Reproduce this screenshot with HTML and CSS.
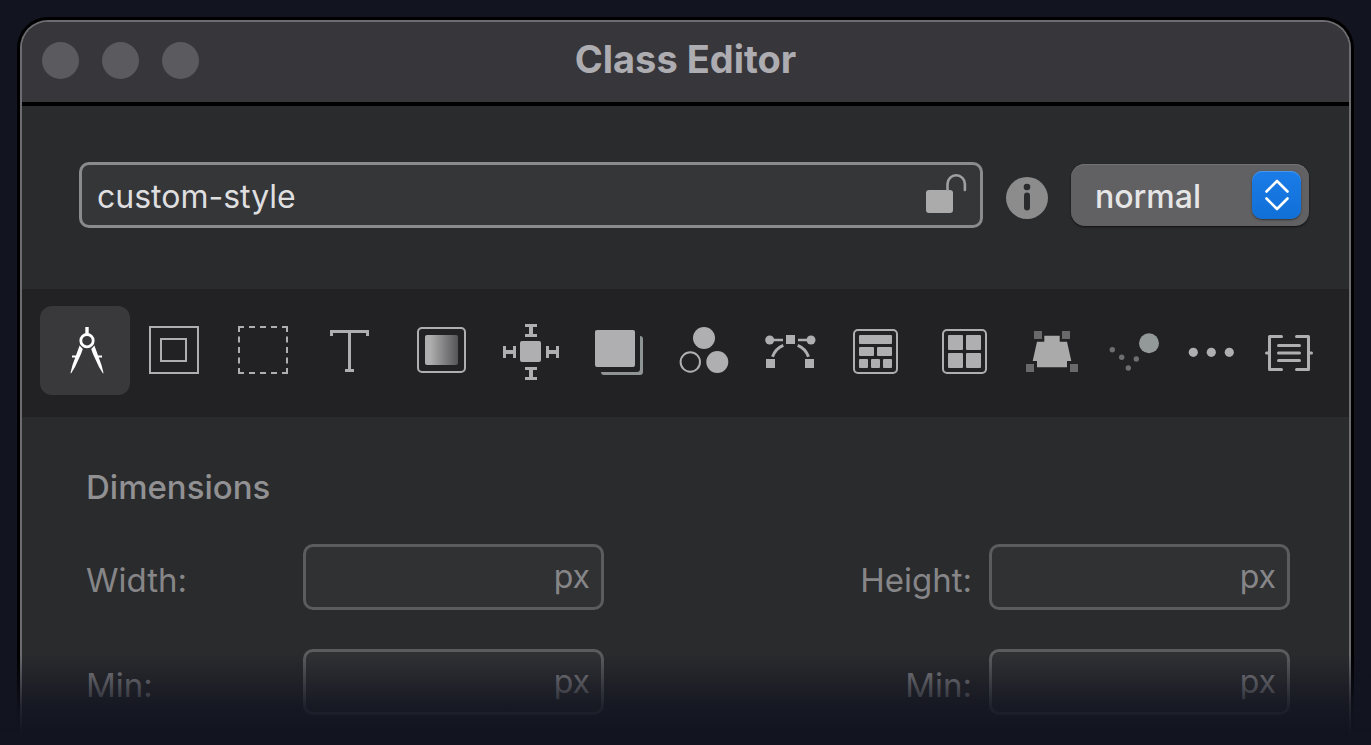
FILE: index.html
```html
<!DOCTYPE html>
<html lang="en">
<head>
  <meta charset="UTF-8" />
  <meta name="viewport" content="width=device-width, initial-scale=1.0"/>
  <title>Class Editor</title>
  <link rel="stylesheet" href="styles.css">
</head>
<body>

  <main class="window">
    <header class="titlebar">
      <div class="lights">
        <button class="light" aria-label="Close"></button>
        <button class="light" aria-label="Minimize"></button>
        <button class="light" aria-label="Zoom"></button>
      </div>
      <h1>Class Editor</h1>
    </header>

    <div class="class-row">
      <div class="name-field">
        <input type="text" class="name-input" aria-label="Class name" value="custom-style" />
        <button class="icon-btn" aria-label="Unlock">
          <svg width="42" height="42" viewBox="0 2 42 42">
            <rect x="1" y="18" width="27" height="23" rx="3" fill="#ababab"/>
            <path d="M22.500 18V12a8.700 8.700 0 0 1 17.400 0V18" fill="none" stroke="#a0a0a0" stroke-width="2.600" stroke-linecap="round"/>
          </svg>
        </button>
      </div>
      <button class="icon-btn info" aria-label="Info">
        <svg width="42" height="42" viewBox="0 0 42 42">
          <circle cx="21" cy="21" r="21" fill="#8c8c8c"/>
          <circle cx="21" cy="10" r="3.300" fill="#2a2b2d"/>
          <rect x="18" y="15.500" width="6" height="18" rx="3" fill="#2a2b2d"/>
        </svg>
      </button>
      <div class="state">
        <select class="state-select" aria-label="State">
          <option>normal</option>
          <option>hover</option>
          <option>active</option>
          <option>focus</option>
        </select>
        <span class="state-arrows">
          <svg width="49" height="48" viewBox="0 0 49 48">
            <path d="M14.500 20.500 25 10l10.500 10.500M14.500 27.500 25 38l10.500-10.500" fill="none" stroke="#fff" stroke-width="2.600" stroke-linecap="round" stroke-linejoin="round"/>
          </svg>
        </span>
      </div>
    </div>

    <nav class="toolbar">
      <button class="tool active" aria-label="Dimensions">
        <svg viewBox="0 0 60 60" fill="#fff">
          <path d="M30.300 6h3.400v7h-3.400z"/>
          <circle cx="32" cy="19.700" r="6.200" fill="none" stroke="#fff" stroke-width="2.800"/>
          <path d="M24.600 24.500 27.800 28 26 33 20 46 16 52.500l-.5-.5L17.500 44zM39.400 24.500 36.200 28 38 33 44 46 48 52.500l.5-.5L46.500 44z"/>
          <path d="M17 34.500h5v2h-5zM42 34.500h5v2h-5z"/>
        </svg>
      </button>
      <button class="tool" aria-label="Margin and padding">
        <svg viewBox="0 0 60 60" fill="none" stroke="currentColor" stroke-width="2">
          <rect x="6" y="6" width="48" height="46"/>
          <rect x="17" y="18" width="25" height="22"/>
        </svg>
      </button>
      <button class="tool" aria-label="Border">
        <svg viewBox="0 0 60 60" fill="none" stroke="currentColor" stroke-width="2">
          <path d="M6 6h50M6 52h50" stroke-dasharray="6 5"/>
          <path d="M7 5v48M55 5v48" stroke-dasharray="6 4.500"/>
        </svg>
      </button>
      <button class="tool" aria-label="Text">
        <svg viewBox="0 0 60 60">
          <path d="M9 9h39v6h-3v-3H30v36h3v3h-9v-3h3V12H12v3H9z"/>
        </svg>
      </button>
      <button class="tool" aria-label="Background">
        <svg viewBox="0 0 60 60">
          <defs>
            <linearGradient id="fade">
              <stop offset=".15" stop-color="#afafb0"/>
              <stop offset="1" stop-color="#555557"/>
            </linearGradient>
          </defs>
          <rect x="7" y="7" width="47" height="44" rx="4" fill="none" stroke="currentColor" stroke-width="2"/>
          <rect x="14" y="14" width="33" height="30" rx="2" fill="url(#fade)"/>
        </svg>
      </button>
      <button class="tool" aria-label="Position">
        <svg viewBox="0 0 60 60">
          <rect x="20" y="20" width="21" height="21" rx="2"/>
          <path d="M25 3h12v3h-4v7h4v3H25v-3h4V6h-4zM25 46h12v3h-4v7h4v3H25v-3h4v-7h-4z"/>
          <path d="M3 25h3v4h7v-4h3v12h-3v-4H6v4H3zM46 25h3v4h7v-4h3v12h-3v-4h-7v4h-3z"/>
        </svg>
      </button>
      <button class="tool" aria-label="Shadow">
        <svg viewBox="0 0 60 60">
          <rect x="7" y="9" width="40" height="37" rx="2"/>
          <path d="M52 15q3 0 3 3v33q0 3-3 3H16q-3 0-3-3h36q3 0 3-3z" fill="#8f9494"/>
        </svg>
      </button>
      <button class="tool" aria-label="Filters">
        <svg viewBox="0 0 60 60">
          <circle cx="29" cy="17" r="11"/>
          <circle cx="42.300" cy="41" r="11"/>
          <circle cx="15.300" cy="41" r="9.700" fill="none" stroke="currentColor" stroke-width="2"/>
        </svg>
      </button>
      <button class="tool" aria-label="Transition">
        <svg viewBox="0 0 60 60">
          <path d="M25 14h9v9h-9zM5 38h9v9H5zM44 38h9v9h-9z"/>
          <circle cx="8.700" cy="19" r="4.500"/>
          <circle cx="50" cy="19" r="4.500"/>
          <path d="M11 17.700h11v2.600H11zM37 17.700h11v2.600H37z"/>
          <path d="M11.500 35.700Q14.500 27.500 22.300 24.300M47.500 35.700Q44.500 27.500 36.700 24.300" fill="none" stroke="currentColor" stroke-width="3"/>
        </svg>
      </button>
      <button class="tool" aria-label="Flexbox">
        <svg viewBox="0 0 60 60">
          <rect x="7" y="9" width="43" height="43" rx="4" fill="none" stroke="currentColor" stroke-width="2"/>
          <rect x="12" y="14" width="33" height="9" rx="1"/>
          <rect x="12" y="26" width="15" height="9" rx="1"/>
          <rect x="30" y="26" width="15" height="9" rx="1"/>
          <rect x="12" y="38" width="9" height="9" rx="1"/>
          <rect x="24" y="38" width="9" height="9" rx="1"/>
          <rect x="36" y="38" width="9" height="9" rx="1"/>
        </svg>
      </button>
      <button class="tool" aria-label="Grid">
        <svg viewBox="0 0 60 60">
          <rect x="9" y="9" width="43" height="43" rx="4" fill="none" stroke="currentColor" stroke-width="2"/>
          <rect x="14" y="14" width="15" height="15" rx="1"/>
          <rect x="32" y="14" width="15" height="15" rx="1"/>
          <rect x="14" y="32" width="15" height="15" rx="1"/>
          <rect x="32" y="32" width="15" height="15" rx="1"/>
        </svg>
      </button>
      <button class="tool" aria-label="Transform">
        <svg viewBox="0 0 60 60">
          <path d="M22.300 14.700h15.400v6H45l4.300 19.300H45v6.300H15V40h-4.300L15 20.700h7.300z" fill="#aaaaab"/>
          <path d="M12 10h8v8h-8zM40 10h8v8h-8zM4 43h8v8H4zM48 43h8v8h-8z" fill="#69696a"/>
        </svg>
      </button>
      <button class="tool" aria-label="Animation">
        <svg viewBox="0 0 60 60" fill="#6c6e70">
          <circle cx="45" cy="22.300" r="10" fill="#939899"/>
          <circle cx="8.300" cy="28.700" r="2.700"/>
          <circle cx="17.700" cy="36.300" r="2.700"/>
          <circle cx="32.300" cy="38" r="2.700"/>
          <circle cx="24.300" cy="47" r="2.700"/>
        </svg>
      </button>
      <button class="tool" aria-label="More">
        <svg viewBox="0 0 60 60">
          <circle cx="12.300" cy="31.300" r="4.600"/>
          <circle cx="30.300" cy="31.300" r="4.600"/>
          <circle cx="48.300" cy="31.300" r="4.600"/>
        </svg>
      </button>
      <button class="tool" aria-label="Custom code">
        <svg viewBox="0 0 60 60" fill="none" stroke="currentColor" stroke-width="3" stroke-linecap="round" stroke-linejoin="round">
          <path d="M22.500 15.500h-12v33h12M37.500 15.500h12v33h-12M7.500 32h3M49.500 32h3"/>
          <path d="M19.500 24.500h21M19.500 32h21M19.500 39.500h21"/>
        </svg>
      </button>
    </nav>

    <section class="panel">
      <h2>Dimensions</h2>
      <div class="fields">
        <label for="width">Width:</label>
        <div class="unit-field"><input type="text" id="width" /><span>px</span></div>
        <label for="height" class="right">Height:</label>
        <div class="unit-field"><input type="text" id="height" /><span>px</span></div>
        <label for="minWidth">Min:</label>
        <div class="unit-field"><input type="text" id="minWidth" /><span>px</span></div>
        <label for="minHeight" class="right">Min:</label>
        <div class="unit-field"><input type="text" id="minHeight" /><span>px</span></div>
      </div>
    </section>
  </main>

  <div class="fade-out"></div>

</body>
</html>
```
FILE: styles.css
```css
:root {
  --bg: #121420;
  --window: #2a2b2d;
  --titlebar: #37363b;
  --toolbar: #222224;
  --icon: #afaeb1;
}

* {
  box-sizing: border-box;
}

body {
  margin: 0;
  height: 100vh;
  overflow: hidden;
  padding: 20px 20px 0;
  background-color: var(--bg);
  font-family: Inter, "Liberation Sans", sans-serif;
  font-size: 33px;
  line-height: 42px;
}

button, input, select {
  font: inherit;
  margin: 0;
  padding: 0;
  border: none;
  background: none;
}

svg {
  display: block;
}

.window {
  min-height: 100%;
  border: 2px solid #6d6c70;
  border-bottom: none;
  border-radius: 28px 28px 0 0;
  background-color: var(--window);
  box-shadow: 0 0 0 3px #000;
}

/* title bar */
.titlebar {
  display: grid;
  grid-template-columns: 1fr auto 1fr;
  align-items: center;
  height: 84px;
  padding: 0 20px 6px;
  border-bottom: 4px solid #000;
  border-radius: 26px 26px 0 0;
  background-color: var(--titlebar);
}

.lights {
  display: flex;
  gap: 23px;
  padding-top: 2px;
}

.light {
  width: 37px;
  height: 37px;
  border-radius: 50%;
  background-color: #5b5a5f;
}

h1 {
  margin: 0;
  font-size: 38px;
  font-weight: 700;
  color: #adacb1;
}

/* class name row */
.class-row {
  display: flex;
  align-items: center;
  gap: 23px;
  padding: 56px 40px 61px 57px;
}

.name-field {
  flex: 1;
  display: flex;
  align-items: center;
  height: 66px;
  padding: 0 13px 0 15px;
  border: 3px solid #8b8b8c;
  border-radius: 10px;
  background-color: #353638;
}

.name-input {
  flex: 1;
  min-width: 0;
  padding-top: 3px;
  font-size: 32px;
  color: #dfdfe0;
}

.info {
  padding-top: 6px;
}

.state {
  position: relative;
}

.state-select {
  appearance: none;
  display: block;
  width: 238px;
  height: 62px;
  padding: 3px 0 0 24px;
  border-radius: 14px;
  background-color: #616163;
  box-shadow: inset 0 1px #727274, 0 1px 2px #111;
  color: #e6e6e7;
  font-size: 32px;
  font-weight: 500;
}

.state-arrows {
  position: absolute;
  top: 7px;
  right: 8px;
  border-radius: 10px;
  background: linear-gradient(#1b7ce8, #116fd6);
  box-shadow: inset 0 1px #4a97ec, 0 1px 2px #333;
  pointer-events: none;
}

/* toolbar */
.toolbar {
  display: grid;
  grid-template-columns: 90fr 88fr 88fr 90fr 90fr 88fr 88fr 86fr 86fr 86fr 88fr 88fr 76fr 78fr 78fr;
  padding: 17px 21px 22px 18px;
  background-color: var(--toolbar);
}

.tool {
  display: flex;
  justify-content: center;
  padding: 15px 0 14px;
  border-radius: 12px;
  color: var(--icon);
}

.tool.active {
  background-color: #39393b;
}

.tool svg {
  width: 60px;
  height: 60px;
}

.tool svg:not([fill]) {
  fill: currentColor;
}

/* dimensions */
.panel {
  padding: 49px 59px 0 64px;
  color: #868688;
}

h2 {
  margin: 0 0 36px;
  font-size: 33px;
  font-weight: 500;
  color: #919193;
}

.fields {
  display: grid;
  grid-template-columns: auto 301px 1fr 301px;
  column-gap: 17px;
  row-gap: 39px;
  align-items: center;
}

.fields label {
  min-width: 200px;
  padding-top: 5px;
}

.right {
  text-align: right;
}

.unit-field {
  display: flex;
  align-items: center;
  height: 66px;
  padding: 0 11px;
  border: 3px solid #5b5c5e;
  border-radius: 10px;
  background-color: #303133;
  font-size: 32px;
}

.unit-field input {
  flex: 1;
  min-width: 0;
  color: #dfdfe0;
}

/* the window dissolves into the page background */
.fade-out {
  position: fixed;
  left: 0;
  right: 0;
  bottom: 0;
  height: 90px;
  background: linear-gradient(rgba(18, 20, 32, 0), rgba(18, 20, 32, 0.4) 28%, rgba(18, 20, 32, 0.8) 56%, rgba(18, 20, 32, 1) 88%);
  pointer-events: none;
}
```
